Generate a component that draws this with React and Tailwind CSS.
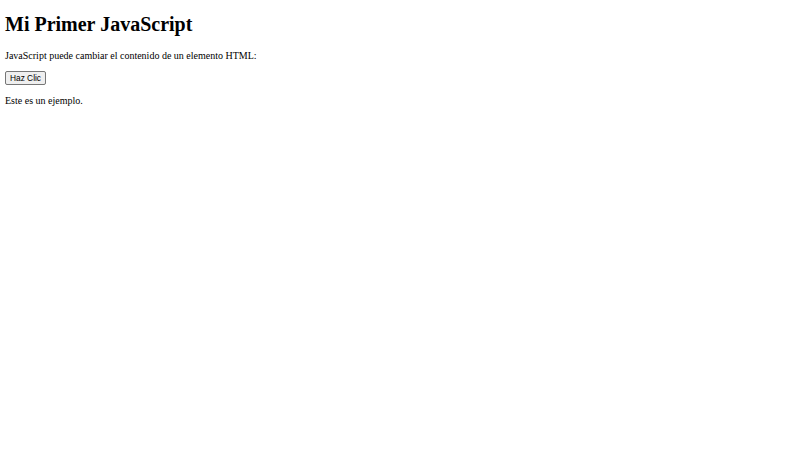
export default function App() {
  return (
    <div className="min-h-[450px] bg-white px-[5px] pt-0 text-[10px] leading-[11.5px] text-black" style={{ fontFamily: '"Liberation Serif", "Times New Roman", serif' }}>
      <h1 className="my-[13.4px] text-[20px] font-bold leading-[23px]">Mi Primer JavaScript</h1>
      <p className="my-[10px] text-[10px] leading-[11.5px]">JavaScript puede cambiar el contenido de un elemento HTML:</p>
      <div className="flex">
        <button
          type="button"
          className="rounded-[2px] border border-[#767676] bg-[#efefef] px-[4px] py-[1px] text-[8.33px] leading-[10px] text-black"
          style={{ fontFamily: '"Liberation Sans", Arial, sans-serif' }}
        >
          Haz Clic
        </button>
      </div>
      <p className="my-[10px] text-[10px] leading-[11.5px]">Este es un ejemplo.</p>
    </div>
  );
}
